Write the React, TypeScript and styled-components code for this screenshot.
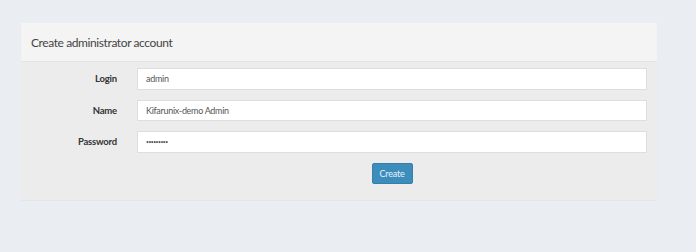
import React from "react";
import styled, { createGlobalStyle } from "styled-components";

const Global = createGlobalStyle`
  html, body { margin: 0; padding: 0; background: #eaedf2; }
  body { font-family: "Lato", "Noto Sans", sans-serif; color: #333; }
`;

const Page = styled.div`
  width: 696px;
  height: 252px;
  box-sizing: border-box;
  padding: 23px 39px 0 21px;
`;

const Card = styled.section`
  background: #ececec;
  box-shadow: 0 1px 1px rgba(0, 0, 0, 0.03);
`;

const Header = styled.header`
  height: 39px;
  box-sizing: border-box;
  background: #f4f4f4;
  border-bottom: 1px solid #e4e4e4;
  display: flex;
  align-items: center;
  padding: 0 10px;
  font-size: 12px;
  letter-spacing: -0.4px;
  color: #444;
`;

const Body = styled.div`
  padding: 6px 10px 16px 10px;
  display: flex;
  flex-direction: column;
  gap: 10px;
`;

const Row = styled.div`
  display: grid;
  grid-template-columns: 86px 1fr;
  column-gap: 20px;
  align-items: center;
`;

const Label = styled.label`
  text-align: right;
  font-weight: 700;
  font-size: 9.5px;
  letter-spacing: -0.2px;
  color: #333;
`;

const Input = styled.input<{ $mask?: boolean }>`
  height: 21.5px;
  box-sizing: border-box;
  margin: 0;
  border: 1px solid #dedede;
  background: #fff;
  padding: 0 8px;
  font-family: inherit;
  font-size: ${(p) => (p.$mask ? "5px" : "9px")};
  letter-spacing: ${(p) => (p.$mask ? "-0.5px" : "-0.3px")};
  color: #555;
  outline: none;
`;

const Actions = styled.div`
  display: flex;
  justify-content: center;
  padding-left: 106px;
`;

const Button = styled.button`
  height: 21px;
  padding: 0 7px;
  background: #3c8dbc;
  border: 1px solid #367fa9;
  border-radius: 2px;
  color: #e8f1f7;
  font-family: inherit;
  font-size: 9px;
  letter-spacing: -0.2px;
`;

export default function App() {
  return (
    <>
      <Global />
      <Page>
        <Card>
          <Header>Create administrator account</Header>
          <Body>
            <Row>
              <Label>Login</Label>
              <Input defaultValue="admin" />
            </Row>
            <Row>
              <Label>Name</Label>
              <Input defaultValue="Kifarunix-demo Admin" />
            </Row>
            <Row>
              <Label>Password</Label>
              <Input $mask type="password" defaultValue="xxxxxxxxx" />
            </Row>
            <Actions>
              <Button>Create</Button>
            </Actions>
          </Body>
        </Card>
      </Page>
    </>
  );
}
